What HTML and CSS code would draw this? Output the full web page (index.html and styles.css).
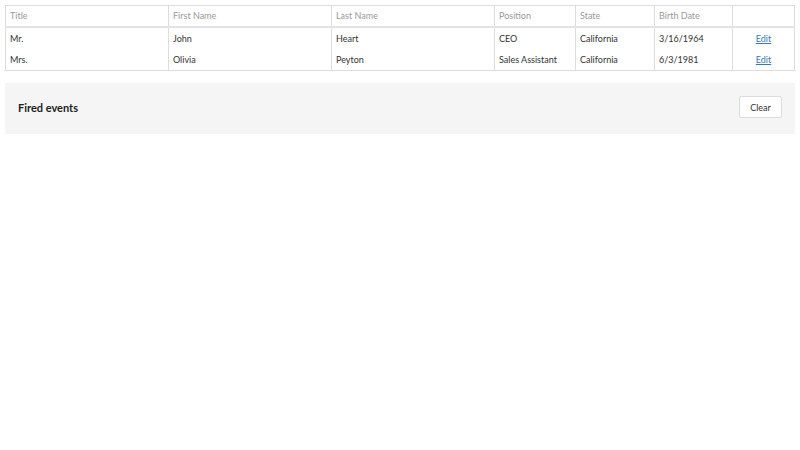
FILE: index.html
```html
<!DOCTYPE html>
<html lang="en">

<head>
    <meta charset="UTF-8">
    <title>Grid - Fired events</title>
    <link rel="stylesheet" href="styles.css">
</head>

<body>

    <!-- Grid -->
    <table class="grid">
        <colgroup>
            <col class="col-wide">
            <col class="col-wide">
            <col class="col-wide">
            <col class="col-pos">
            <col class="col-state">
            <col class="col-date">
            <col>
        </colgroup>
        <thead>
            <tr>
                <th>Title</th>
                <th>First Name</th>
                <th>Last Name</th>
                <th>Position</th>
                <th>State</th>
                <th>Birth Date</th>
                <th></th>
            </tr>
        </thead>
        <tbody>
            <tr>
                <td>Mr.</td>
                <td>John</td>
                <td>Heart</td>
                <td>CEO</td>
                <td>California</td>
                <td>3/16/1964</td>
                <td class="command"><a href="#">Edit</a></td>
            </tr>
            <tr>
                <td>Mrs.</td>
                <td>Olivia</td>
                <td>Peyton</td>
                <td>Sales Assistant</td>
                <td>California</td>
                <td>6/3/1981</td>
                <td class="command"><a href="#">Edit</a></td>
            </tr>
        </tbody>
    </table>

    <!-- Log de eventos -->
    <div class="events">
        <div class="events-title">Fired events</div>
        <button class="clear-button">Clear</button>
    </div>

</body>

</html>
```

FILE: styles.css
```css
* {
    margin: 0;
    padding: 0;
    box-sizing: border-box;
}

body {
    font-family: Lato, "Open Sans", sans-serif;
    font-size: 9px;
    color: #333;
    background-color: #fff;
    padding: 5px;
}

/* Grid */
.grid {
    width: 100%;
    border-collapse: collapse;
    table-layout: fixed;
    border: 1px solid #ddd;
}

.col-wide {
    width: 163px;
}

.col-pos {
    width: 81px;
}

.col-state {
    width: 79px;
}

.col-date {
    width: 78px;
}

.grid th,
.grid td {
    border-left: 1px solid #ddd;
    padding: 0 4px;
    text-align: left;
    white-space: nowrap;
    overflow: hidden;
}

.grid th {
    font-weight: normal;
    color: #999;
    height: 21px;
    border-bottom: 2px solid #e3e3e3;
}

.grid td {
    height: 22px;
}

.grid td.command {
    text-align: center;
}

.grid td.command a {
    color: #337ab7;
    text-decoration: underline;
}

/* Eventos */
.events {
    margin-top: 12px;
    background-color: #f5f5f5;
    padding: 13px 13px 16px;
    display: flex;
    justify-content: space-between;
    align-items: center;
}

.events-title {
    font-weight: bold;
    font-size: 11px;
    color: #222;
}

.clear-button {
    font-family: inherit;
    font-size: 9px;
    color: #333;
    background-color: #fff;
    border: 1px solid #ddd;
    border-radius: 2px;
    width: 43px;
    height: 22px;
    cursor: pointer;
}
```
